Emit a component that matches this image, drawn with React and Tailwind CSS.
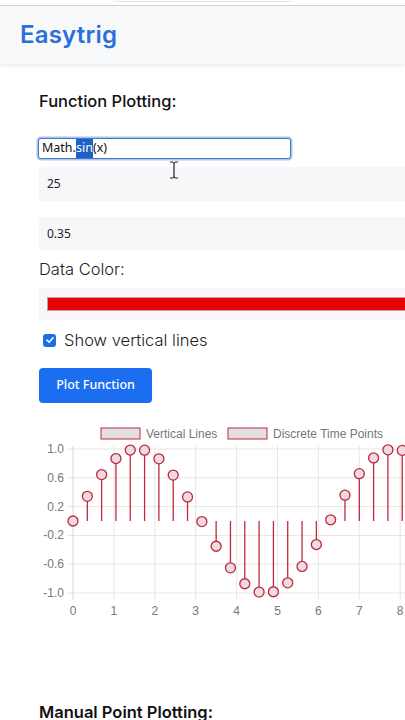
import React from "react";

const X0 = 73;
const XU = 40.9;
const Y0 = 521;
const YU = 72;

function Chart() {
  const pts = [];
  for (let n = 0; n <= 23; n++) {
    const x = n * 0.35;
    pts.push({ px: X0 + x * XU, py: Y0 - Math.sin(x) * YU });
  }
  const yTicks = [1.0, 0.6, 0.2, -0.2, -0.6, -1.0];
  const xTicks = [0, 1, 2, 3, 4, 5, 6, 7, 8];
  return (
    <svg
      width="366"
      height="200"
      viewBox="39 420 366 200"
      className="block"
      style={{ fontFamily: '"Liberation Sans", Arial, sans-serif' }}
    >
      {yTicks.map((t) => (
        <g key={"y" + t}>
          <line x1={X0 - 6} x2={410} y1={Y0 - t * YU} y2={Y0 - t * YU} stroke="#e6e6e6" strokeWidth="1" />
          <text x={64} y={Y0 - t * YU + 4} fontSize="12" fill="#777" textAnchor="end">
            {t.toFixed(1)}
          </text>
        </g>
      ))}
      {xTicks.map((t) => (
        <g key={"x" + t}>
          <line x1={X0 + t * XU} x2={X0 + t * XU} y1={446} y2={600} stroke={t === 0 ? "#d6d6d6" : "#e6e6e6"} strokeWidth="1" />
          <text x={X0 + t * XU} y={615} fontSize="12" fill="#777" textAnchor="middle">
            {t}
          </text>
        </g>
      ))}
      {pts.map((p, i) => (
        <line key={"s" + i} x1={p.px} x2={p.px} y1={Y0} y2={p.py} stroke="#c0283f" strokeWidth="1.3" />
      ))}
      {pts.map((p, i) => (
        <circle key={"c" + i} cx={p.px} cy={p.py} r="5" fill="#ecdcdf" stroke="#c0283f" strokeWidth="1.3" />
      ))}
      <rect x="101" y="428" width="39" height="11" fill="#e4e0e0" stroke="#c84a5c" strokeWidth="1.2" />
      <text x="146" y="437.5" fontSize="12" fill="#777">Vertical Lines</text>
      <rect x="228" y="428" width="39" height="11" fill="#e4e0e0" stroke="#c84a5c" strokeWidth="1.2" />
      <text x="273" y="437.5" fontSize="12" fill="#777">Discrete Time Points</text>
    </svg>
  );
}

export default function App() {
  const head = { fontFamily: 'Inter, "Noto Sans", sans-serif' };
  const body = { fontFamily: '"Noto Sans", "Open Sans", sans-serif' };
  return (
    <div className="relative w-[405px] h-[720px] overflow-hidden bg-white">
      <div className="h-[6px] bg-white border-b border-[#d4d4d8] flex justify-center">
        <div className="w-[180px] h-[2px] border-b border-[#e5e5e5] rounded-b" />
      </div>
      <header className="h-[58px] bg-[#f8f9fb] shadow-[0_2px_4px_rgba(0,0,0,0.08)] flex items-center pl-[20px]">
        <span className="text-[24px] font-semibold text-[#2c6fd9] tracking-[0.2px]" style={head}>
          Easytrig
        </span>
      </header>
      <main className="pl-[39px] w-[480px]">
        <h2 className="mt-[27px] h-[20px] leading-[20px] text-[16.5px] font-medium text-[#111]" style={head}>
          Function Plotting:
        </h2>
        <div
          className="mt-[27px] ml-[-1px] w-[253px] h-[21px] bg-white border border-[#4a78c8] rounded-[3px] shadow-[0_0_0_1.5px_#a9c4ee] flex items-center pl-[3px] text-[12.5px] text-[#111]"
          style={body}
        >
          <span>Math.</span>
          <span className="bg-[#1a62c9] text-white">sin</span>
          <span>(x)</span>
        </div>
        <div className="mt-[8px] w-[420px] h-[34px] bg-[#f7f7f9] flex items-center pl-[8px] text-[12px] text-[#222]" style={body}>
          25
        </div>
        <div className="mt-[16px] w-[420px] h-[33px] bg-[#f7f7f9] flex items-center pl-[8px] text-[12px] text-[#222]" style={body}>
          0.35
        </div>
        <div className="mt-[9px] h-[20px] leading-[20px] text-[16.5px] font-light text-[#222]" style={head}>
          Data Color:
        </div>
        <div className="mt-[9px] w-[420px] h-[32px] bg-[#f7f7f9] flex items-center pl-[8px]">
          <div className="w-[400px] h-[14px] bg-[#e60000] border border-[#c9a0a0]" />
        </div>
        <label className="mt-[10px] h-[20px] flex items-center gap-[8px] pl-[4px]">
          <span className="w-[13px] h-[13px] rounded-[3px] bg-[#1a6fe8] flex items-center justify-center">
            <svg width="10" height="10" viewBox="0 0 10 10">
              <path d="M2 5.2 L4.1 7.2 L8 2.8" stroke="white" strokeWidth="1.6" fill="none" strokeLinecap="round" strokeLinejoin="round" />
            </svg>
          </span>
          <span className="text-[16.5px] font-light text-[#222]" style={head}>
            Show vertical lines
          </span>
        </label>
        <button
          className="mt-[18px] w-[113px] h-[35px] rounded-[4px] bg-[#1b6ef0] text-white text-[12.5px] font-medium flex items-center justify-center"
          style={body}
        >
          Plot Function
        </button>
        <div className="mt-[17px] ml-[0px]">
          <Chart />
        </div>
        <h2 className="mt-[82px] h-[20px] leading-[20px] text-[16.5px] font-semibold text-[#111]" style={head}>
          Manual Point Plotting:
        </h2>
      </main>
      <svg className="absolute left-[169px] top-[161px]" width="10" height="18" viewBox="0 0 10 18">
        <path d="M1 1 H4 M6 1 H9 M5 2 V16 M1 17 H4 M6 17 H9 M4 1.5 Q5 1.5 5 2.5 M6 1.5 Q5 1.5 5 2.5 M4 16.5 Q5 16.5 5 15.5 M6 16.5 Q5 16.5 5 15.5" stroke="#222" strokeWidth="1.2" fill="none" />
      </svg>
    </div>
  );
}
